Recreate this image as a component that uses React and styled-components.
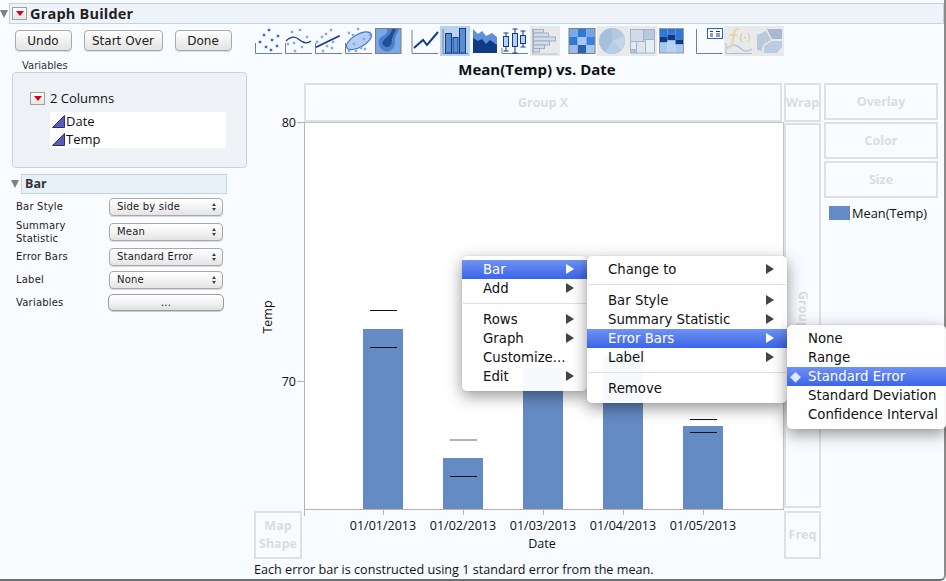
import React from 'react';
import styled, { createGlobalStyle } from 'styled-components';

const GlobalStyle = createGlobalStyle`
  html, body { margin: 0; padding: 0; background: #f8fbff; }
  body { font-family: "Open Sans", "DejaVu Sans", sans-serif; overflow: hidden; }
`;

const Shell = styled.div`
  position: relative;
  width: 946px;
  height: 581px;
  overflow: hidden;
`;

const Page = styled.div`
  box-sizing: border-box;
  width: 946px;
  height: 581px;
  background: #f8fbff;
  color: #111;
  overflow: hidden;
  border-bottom: 2px solid #6e6e6e;
  border-right: 2px solid #8c8c8c;
  border-bottom-right-radius: 6px;
`;

const HeaderRow = styled.div`
  display: flex;
  align-items: center;
  height: 21px;
  margin-top: 3px;
`;

const Disclosure = styled.span`
  flex: none;
  width: 0;
  height: 0;
  margin-left: ${(p) => p.$left || 0}px;
  margin-right: ${(p) => p.$right || 0}px;
  border-left: 4.5px solid transparent;
  border-right: 4.5px solid transparent;
  border-top: 8px solid #808080;
`;

const TitleBar = styled.div`
  flex: 1;
  box-sizing: border-box;
  height: 21px;
  display: flex;
  align-items: center;
  gap: 3px;
  padding-left: 2px;
  background: #edf3f9;
  border: 1px solid #bdd5e6;
`;

const TitleText = styled.span`
  font-family: "Open Sans", sans-serif;
  font-weight: 700;
  font-size: 14.5px;
  letter-spacing: 0.2px;
  color: #222;
`;

const RedButton = styled.span`
  flex: none;
  box-sizing: border-box;
  width: 15px;
  height: 13px;
  display: flex;
  align-items: center;
  justify-content: center;
  background: linear-gradient(#fdfdfd, #e6e6e6);
  border: 1px solid #a0a0a0;
  &::after {
    content: '';
    width: 0;
    height: 0;
    border-left: 4.5px solid transparent;
    border-right: 4.5px solid transparent;
    border-top: 5px solid #d8001c;
  }
`;

const Body = styled.div`
  display: flex;
  height: 555px;
`;

const LeftColumn = styled.div`
  flex: none;
  width: 254px;
  padding-top: 6px;
`;

const ButtonRow = styled.div`
  display: flex;
  gap: 12px;
  padding-left: 15px;
`;

const PushButton = styled.button`
  box-sizing: border-box;
  width: ${(p) => p.$w}px;
  height: 21px;
  padding: 0 1px 0 0;
  font-family: "DejaVu Sans", sans-serif;
  font-size: 12px;
  color: #222;
  background: linear-gradient(#ffffff, #f1f1f1 50%, #e4e4e4);
  border: 1px solid #a8a8a8;
  border-radius: 4px;
  box-shadow: 0 1px 0 #ddd;
`;

const SmallCaption = styled.div`
  margin: 7px 0 0 22px;
  height: 14px;
  line-height: 16px;
  font-family: "DejaVu Sans", sans-serif;
  font-size: 10px;
  color: #333;
`;

const VariablesPanel = styled.div`
  box-sizing: border-box;
  width: 235px;
  height: 96px;
  margin: 0 0 0 12px;
  padding: 16px 0 0 17px;
  background: #eef1f5;
  border: 1px solid #cdd2d8;
  border-radius: 4px;
`;

const ColumnsHead = styled.div`
  display: flex;
  align-items: center;
  gap: 5px;
  height: 18px;
  font-size: 13px;
`;

const ColumnList = styled.div`
  width: 176px;
  height: 36px;
  margin: 5px 0 0 20px;
  background: #fff;
`;

const ColumnRow = styled.div`
  display: flex;
  align-items: center;
  gap: 1px;
  height: 18px;
  padding-left: 2px;
  font-size: 13px;
`;

const SectionHead = styled.div`
  display: flex;
  align-items: center;
  margin-top: 6px;
  padding-left: 11px;
`;

const SectionBar = styled.div`
  box-sizing: border-box;
  width: 206px;
  height: 20px;
  line-height: 18px;
  padding-left: 3px;
  font-weight: 700;
  font-size: 12.5px;
  color: #333;
  background: #e8f0f8;
  border: 1px solid #bdd5e6;
`;

const FormRow = styled.div`
  display: grid;
  grid-template-columns: 93px 115px;
  align-items: center;
  height: ${(p) => p.$h}px;
  padding-left: 16px;
  font-family: "DejaVu Sans", sans-serif;
  font-size: 10px;
  line-height: 13px;
  letter-spacing: 0.2px;
  color: #222;
`;

const Select = styled.div`
  box-sizing: border-box;
  position: relative;
  width: 114px;
  height: 18px;
  line-height: 16px;
  padding-left: 7px;
  background: linear-gradient(#ffffff, #f3f3f3 50%, #e4e4e4);
  border: 1px solid #a9a9a9;
  border-radius: 4px;
  box-shadow: 0 1px 0 #d8d8d8;
  &::before, &::after {
    content: '';
    position: absolute;
    right: 6px;
    width: 0;
    height: 0;
    border-left: 2.5px solid transparent;
    border-right: 2.5px solid transparent;
  }
  &::before { top: 4px; border-bottom: 3px solid #444; }
  &::after { top: 9px; border-top: 3px solid #444; }
`;

const WideButton = styled.div`
  box-sizing: border-box;
  width: 116px;
  height: 17px;
  margin-left: -1px;
  line-height: 15px;
  text-align: center;
  background: linear-gradient(#ffffff, #f3f3f3 50%, #e0e0e0);
  border: 1px solid #9c9c9c;
  border-radius: 5px;
  box-shadow: 0 1px 0 #ccc;
`;

const RightColumn = styled.div`
  flex: 1;
  min-width: 0;
`;

const Toolbar = styled.div`
  display: flex;
  height: 30px;
  margin-top: 2px;
`;

const ToolSlot = styled.div`
  flex: none;
  width: 30px;
  height: 30px;
  margin-left: ${(p) => p.$gap || 0}px;
  background: ${(p) => (p.$tone === 'on' ? '#b9d3ec' : p.$tone === 'off' ? '#e8e9ea' : 'transparent')};
  svg { display: block; }
`;

const GraphTitle = styled.div`
  width: 566px;
  height: 27px;
  line-height: 27px;
  text-align: center;
  font-weight: 700;
  font-size: 15px;
  color: #111;
`;

const GraphGrid = styled.div`
  display: grid;
  grid-template-columns: 50px 480px 39px 115px;
  grid-template-rows: 39px 388px 49px;
`;

const Zone = styled.div`
  box-sizing: border-box;
  display: flex;
  align-items: center;
  justify-content: center;
  height: ${(p) => p.$h || 'auto'};
  margin: ${(p) => p.$mt || 0}px ${(p) => p.$mr || 0}px ${(p) => p.$mb || 0}px 0;
  border: 2px solid #e0e0e0;
  font-weight: 700;
  font-size: 12.5px;
  line-height: 18px;
  text-align: center;
  color: #dcdcdc;
  white-space: nowrap;
  writing-mode: ${(p) => (p.$vertical ? 'vertical-rl' : 'horizontal-tb')};
`;

const SideStack = styled.div`
  grid-column: 4;
  grid-row: 1 / 3;
  display: flex;
  flex-direction: column;
  gap: 2px;
  padding-left: 1px;
`;

const Legend = styled.div`
  display: flex;
  align-items: center;
  gap: 2px;
  margin: 4px 0 0 5px;
  height: 18px;
  font-size: 12.8px;
`;

const Swatch = styled.span`
  flex: none;
  width: 21px;
  height: 14px;
  background: #658bc4;
`;

const AxisSvg = styled.svg`
  display: block;
  overflow: visible;
  font-family: "Open Sans", sans-serif;
  font-size: 12.5px;
  fill: #111;
`;

const PlotBox = styled.div`
  height: 388px;
  background: #fff;
  svg { display: block; }
`;

const Footnote = styled.div`
  height: 18px;
  line-height: 22px;
  font-size: 12.62px;
  color: #111;
`;

const Menu = styled.div`
  position: absolute;
  left: ${(p) => p.$x}px;
  top: ${(p) => p.$y}px;
  width: ${(p) => p.$w}px;
  box-sizing: border-box;
  padding: 4px 0 5px;
  background: rgba(255, 255, 255, 0.95);
  border-radius: 5px;
  box-shadow: 0 5px 16px rgba(0, 0, 0, 0.42), 0 0 1px rgba(0, 0, 0, 0.3);
  font-family: "DejaVu Sans", sans-serif;
  font-size: 13.3px;
  color: #111;
`;

const MenuItem = styled.div`
  position: relative;
  height: 19px;
  line-height: 20px;
  padding-left: 21px;
  white-space: nowrap;
  color: ${(p) => (p.$active ? '#fff' : '#111')};
  background: ${(p) => (p.$active ? 'linear-gradient(#6f92f3, #3b64ea)' : 'transparent')};
`;

const MenuArrow = styled.span`
  position: absolute;
  right: 13px;
  top: 4px;
  width: 0;
  height: 0;
  border-top: 5px solid transparent;
  border-bottom: 5px solid transparent;
  border-left: 8px solid ${(p) => (p.$active ? '#fff' : '#444')};
`;

const MenuCheck = styled.span`
  position: absolute;
  left: 3px;
  top: 2px;
  font-size: 14px;
  line-height: 15px;
  color: #dfe6ff;
`;

const MenuRule = styled.div`
  height: 1px;
  margin: 5px 1px 6px;
  background: #e0e0e0;
`;

const BLUE = '#2f6fd0';
const NAVY = '#123a8c';
const SOFT = '#86abdf';

function Axes({ x0 = 1.5, x1 = 28, top = 17 }) {
  return <path d={`M${x0} ${top}V27.5H${x1}`} fill="none" stroke="#7f7f7f" strokeWidth="1" />;
}

function Dots({ pts, fill = BLUE }) {
  return pts.map(([x, y, dark], i) => (
    <rect key={i} x={x - 1.25} y={y - 1.25} width="2.5" height="2.5" fill={dark ? fill : SOFT} />
  ));
}

const Icons = {
  scatter: (
    <>
      <Axes />
      <Dots pts={[[15, 4, 1], [10, 9, 1], [24, 10, 1], [18, 14, 1], [6, 16, 1], [12, 21, 1], [23, 20, 1], [17, 24, 1]]} />
    </>
  ),
  smooth: (
    <>
      <Axes />
      <path d="M2 15C7 10 11 10 15 13.5S23 18 27 15" fill="none" stroke={NAVY} strokeWidth="1.2" />
      <Dots pts={[[8, 6], [16, 4], [23, 11], [4, 18], [10, 17], [18, 21], [11, 25]]} />
    </>
  ),
  fit: (
    <>
      <Axes />
      <path d="M2 21.3L25.7 9.7" stroke={NAVY} strokeWidth="1.8" />
      <Dots pts={[[12, 8], [17, 4], [8, 11], [3, 16], [13, 20], [19, 16], [9, 25], [18, 22]]} />
    </>
  ),
  ellipse: (
    <>
      <Axes />
      <ellipse cx="15" cy="14.7" rx="14" ry="6.3" transform="rotate(-30 15 14.7)" fill="#b4cdf0" stroke="#3f78d8" strokeWidth="1.2" />
      <Dots pts={[[5, 7], [9, 9], [14, 3], [26, 9], [20, 13], [10, 18], [17, 22], [5, 25], [12, 25], [21, 23]]} />
    </>
  ),
  contour: (
    <>
      <rect x="1.5" y="2.5" width="25.5" height="25" fill="#7aa6e6" stroke="#7f7f7f" />
      <path d="M13 3C14 7 11 9 7 11C3 14 4 22 10 25C17 27 22 21 21 15C21 10 24 7 25 3Z" fill="#4d80cc" />
      <path d="M18 3C17 8 14 10 10 14C7 17 9 21 13 21C17 21 18 17 18 13C19 9 21 6 22 3Z" fill="#1f5096" />
    </>
  ),
  line: (
    <>
      <Axes x0={2} x1={28} top={4} />
      <path d="M4 22L13 14L17 19L28 6" fill="none" stroke={NAVY} strokeWidth="2" />
    </>
  ),
  bar: (
    <>
      <path d="M3 3V27.5H28" fill="none" stroke="#6f8398" />
      <g fill="#5a8ed2" stroke={NAVY}>
        <rect x="5.5" y="7.5" width="6" height="19.5" />
        <rect x="13" y="11.5" width="5" height="15.5" />
        <rect x="19.5" y="2.5" width="6" height="24.5" />
      </g>
    </>
  ),
  area: (
    <>
      <path d="M3 3L8 8L12 5L16 10L22 7L27 11V27H3Z" fill="#5b8fd6" />
      <path d="M3 12L8 15L12 13L16 18L20 14L27 19V27H3Z" fill="#0f3a86" />
    </>
  ),
  box: (
    <>
      <Axes x0={2} x1={28} top={22} />
      <g fill="#b3d2f5" stroke={NAVY}>
        <path d="M6 7V25M3.5 7H8.5M3.5 25H8.5" fill="none" />
        <rect x="3.5" y="10.5" width="5" height="10" />
        <path d="M15 3V27M12.5 3H17.5M12.5 27H17.5" fill="none" />
        <rect x="12.5" y="7.5" width="5" height="13" />
        <path d="M23 5V21M20.5 5H25.5M20.5 21H25.5" fill="none" />
        <rect x="20.5" y="9.5" width="5" height="8" />
      </g>
    </>
  ),
  hist: (
    <g fill="#d2dcea" stroke="#9fb0c6">
      <path d="M2.5 2V28H28" fill="none" stroke="#b8bdc4" />
      <rect x="3.5" y="3.5" width="10" height="3.5" />
      <rect x="3.5" y="7" width="15" height="4" />
      <rect x="3.5" y="11" width="22" height="4" />
      <rect x="3.5" y="15" width="16" height="4" />
      <rect x="3.5" y="19" width="11" height="3.5" />
      <rect x="3.5" y="22.5" width="6" height="3.5" />
    </g>
  ),
  heat: (
    <>
      <rect x="2" y="2.5" width="8.7" height="8.5" fill="#7aa9ea" />
      <rect x="10.7" y="2.5" width="8.7" height="8.5" fill="#2f78d8" />
      <rect x="19.4" y="2.5" width="8.6" height="8.5" fill="#74a6e8" />
      <rect x="2" y="11" width="8.7" height="8" fill="#2f78d8" />
      <rect x="10.7" y="11" width="8.7" height="8" fill="#a5c8f2" />
      <rect x="19.4" y="11" width="8.6" height="8" fill="#3b80dc" />
      <rect x="2" y="19" width="8.7" height="8.5" fill="#96bdec" />
      <rect x="10.7" y="19" width="8.7" height="8.5" fill="#2d62ae" />
      <rect x="19.4" y="19" width="8.6" height="8.5" fill="#a5c8f2" />
      <rect x="2" y="2.5" width="26" height="25" fill="none" stroke="#7f7f7f" />
    </>
  ),
  pie: (
    <>
      <circle cx="15" cy="15" r="13" fill="#a8bfdc" />
      <path d="M15 15L15 2A13 13 0 0 1 27 10Z" fill="#b4c8e2" />
      <path d="M15 15L27 10A13 13 0 0 1 24 24Z" fill="#c3d5e8" />
      <path d="M15 15L24 24A13 13 0 0 1 8 26Z" fill="#b7cbe2" />
    </>
  ),
  treemap: (
    <g stroke="#a8b4c2">
      <rect x="3.5" y="3.5" width="13" height="12" fill="#d0dcea" />
      <rect x="16.5" y="3.5" width="11" height="10" fill="#b3c9e2" />
      <rect x="3.5" y="15.5" width="6" height="8" fill="#e4ebf2" />
      <rect x="3.5" y="23.5" width="6" height="3.5" fill="#aac0da" />
      <rect x="9.5" y="15.5" width="9" height="11.5" fill="#dde6f0" />
      <rect x="18.5" y="13.5" width="9" height="13.5" fill="#e6edf4" />
    </g>
  ),
  mosaic: (
    <>
      <rect x="2.5" y="2.5" width="8" height="8" fill="#2f78d8" />
      <rect x="2.5" y="10.5" width="8" height="6" fill="#0f3a86" />
      <rect x="2.5" y="16.5" width="8" height="10.5" fill="#a5c8f2" />
      <rect x="10.5" y="2.5" width="8" height="6" fill="#2f78d8" />
      <rect x="10.5" y="8.5" width="8" height="6" fill="#0f3a86" />
      <rect x="10.5" y="14.5" width="8" height="12.5" fill="#b3d2f5" />
      <rect x="18.5" y="2.5" width="8" height="11" fill="#2f78d8" />
      <rect x="18.5" y="13.5" width="8" height="5" fill="#0f3a86" />
      <rect x="18.5" y="18.5" width="8" height="8.5" fill="#a5c8f2" />
      <rect x="2.5" y="2.5" width="24" height="24.5" fill="none" stroke="#9a9a9a" />
    </>
  ),
  caption: (
    <>
      <path d="M2.5 3V27.5H28.5" fill="none" stroke="#7f7f7f" />
      <rect x="13.5" y="2.5" width="15" height="10" fill="#fff" stroke="#2f62c8" />
      <path d="M16 5.5H19M16 8H19M16 10H19M22 5.5H26M22 8H26M22 10H26" stroke={NAVY} />
    </>
  ),
  formula: (
    <>
      <path d="M2 17V27.5H28" fill="none" stroke="#b8bdc4" />
      <path d="M3 22C8 18 12 18 16 22S24 26 28 23" fill="none" stroke="#aebfd6" strokeWidth="1.2" />
      <path d="M15 3C11 2 10 5 10 8L8 19C7 22 6 22 4 21M6 9H13" fill="none" stroke="#e6d7a6" strokeWidth="2" />
      <path d="M18 7C16 10 16 13 18 16M24 7C26 10 26 13 24 16" fill="none" stroke="#d8cfae" strokeWidth="1.2" />
      <circle cx="21" cy="11.5" r="1" fill="#d8cfae" />
    </>
  ),
  map: (
    <>
      <path d="M3 9L12 5L17 14L9 19L8 25L3 24Z" fill="#b9c9de" />
      <path d="M13 3H28V13L18 13Z" fill="#a8b8cf" />
      <path d="M10 20L18 15L28 15V21L23 27H10Z" fill="#bccce0" />
    </>
  ),
};

const toolbar = [
  ['scatter'], ['smooth'], ['fit'], ['ellipse'], ['contour'],
  ['line', null, 6], ['bar', 'on'], ['area'], ['box'], ['hist', 'off'],
  ['heat', null, 7], ['pie', 'off'], ['treemap', 'off'], ['mosaic'],
  ['caption', null, 7], ['formula', 'off'], ['map', 'off'],
];

const ColumnGlyph = () => (
  <svg width="13" height="13" viewBox="0 0 13 13">
    <path d="M0.5 12.5L12.5 0.5V12.5Z" fill="#5c5cb4" stroke="#2a2a86" />
  </svg>
);

const bars = [
  { x: 59, top: 207, hi: 188.5, lo: 225.5 },
  { x: 139, top: 336, hi: 318, lo: 354.5, faint: true },
  { x: 219, top: 246 },
  { x: 299, top: 234 },
  { x: 379, top: 304, hi: 297.5, lo: 310.5 },
];

function Plot() {
  return (
    <PlotBox>
      <svg width="480" height="388">
        {bars.map((b) => (
          <g key={b.x}>
            <rect x={b.x} y={b.top} width="40" height={388 - b.top} fill="#658bc4" />
            {b.hi && <line x1={b.x + 7} x2={b.x + 34} y1={b.hi} y2={b.hi} stroke={b.faint ? '#666' : '#111'} />}
            {b.lo && <line x1={b.x + 7} x2={b.x + 34} y1={b.lo} y2={b.lo} stroke="#111" />}
          </g>
        ))}
        <path d="M0.5 388V0.5H479.5V388" fill="none" stroke="#c4c4c4" />
        <path d="M0 387.5H480M0.5 0V388" fill="none" stroke="#b4b4b4" strokeWidth="1" />
      </svg>
    </PlotBox>
  );
}

function YAxis() {
  return (
    <AxisSvg width="50" height="388">
      <path d="M43 0.5H50M43 259.5H50" stroke="#b4b4b4" />
      <text x="42" y="5" textAnchor="end">80</text>
      <text x="42" y="264" textAnchor="end">70</text>
      <text transform="translate(18 195) rotate(-90)" textAnchor="middle">Temp</text>
    </AxisSvg>
  );
}

function XAxis() {
  const dates = ['01/01/2013', '01/02/2013', '01/03/2013', '01/04/2013', '01/05/2013'];
  return (
    <AxisSvg width="480" height="49">
      <path d="M0.5 0V6" stroke="#b4b4b4" />
      {dates.map((d, i) => (
        <g key={d}>
          <line x1={79.5 + i * 80} x2={79.5 + i * 80} y1="0" y2="5" stroke="#b4b4b4" />
          <text x={79 + i * 80} y="20" textAnchor="middle">{d}</text>
        </g>
      ))}
      <text x="238" y="38" textAnchor="middle">Date</text>
    </AxisSvg>
  );
}

function Cascade() {
  return (
    <>
      <Menu $x={462} $y={256} $w={125}>
        <MenuItem $active>Bar<MenuArrow $active /></MenuItem>
        <MenuItem>Add<MenuArrow /></MenuItem>
        <MenuRule />
        <MenuItem>Rows<MenuArrow /></MenuItem>
        <MenuItem>Graph<MenuArrow /></MenuItem>
        <MenuItem>Customize...</MenuItem>
        <MenuItem>Edit<MenuArrow /></MenuItem>
      </Menu>
      <Menu $x={587} $y={256} $w={200}>
        <MenuItem>Change to<MenuArrow /></MenuItem>
        <MenuRule />
        <MenuItem>Bar Style<MenuArrow /></MenuItem>
        <MenuItem>Summary Statistic<MenuArrow /></MenuItem>
        <MenuItem $active>Error Bars<MenuArrow $active /></MenuItem>
        <MenuItem>Label<MenuArrow /></MenuItem>
        <MenuRule />
        <MenuItem>Remove</MenuItem>
      </Menu>
      <Menu $x={787} $y={325} $w={159}>
        <MenuItem>None</MenuItem>
        <MenuItem>Range</MenuItem>
        <MenuItem $active><MenuCheck>◆</MenuCheck>Standard Error</MenuItem>
        <MenuItem>Standard Deviation</MenuItem>
        <MenuItem>Confidence Interval</MenuItem>
      </Menu>
    </>
  );
}

export default function App() {
  return (
    <Shell>
      <GlobalStyle />
      <Page>
        <HeaderRow>
          <Disclosure $right={1} />
          <TitleBar>
            <RedButton />
            <TitleText>Graph Builder</TitleText>
          </TitleBar>
        </HeaderRow>
        <Body>
          <LeftColumn>
            <ButtonRow>
              <PushButton $w={57}>Undo</PushButton>
              <PushButton $w={79}>Start Over</PushButton>
              <PushButton $w={57}>Done</PushButton>
            </ButtonRow>
            <SmallCaption>Variables</SmallCaption>
            <VariablesPanel>
              <ColumnsHead><RedButton />2 Columns</ColumnsHead>
              <ColumnList>
                <ColumnRow><ColumnGlyph />Date</ColumnRow>
                <ColumnRow><ColumnGlyph />Temp</ColumnRow>
              </ColumnList>
            </VariablesPanel>
            <SectionHead>
              <Disclosure $right={2} />
              <SectionBar>Bar</SectionBar>
            </SectionHead>
            <FormRow $h={25}><span>Bar Style</span><Select>Side by side</Select></FormRow>
            <FormRow $h={25}><span>Summary<br />Statistic</span><Select>Mean</Select></FormRow>
            <FormRow $h={25}><span>Error Bars</span><Select>Standard Error</Select></FormRow>
            <FormRow $h={21}><span>Label</span><Select>None</Select></FormRow>
            <FormRow $h={25}><span>Variables</span><WideButton>...</WideButton></FormRow>
          </LeftColumn>
          <RightColumn>
            <Toolbar>
              {toolbar.map(([name, tone, gap]) => (
                <ToolSlot key={name} $tone={tone} $gap={gap}>
                  <svg width="30" height="30" viewBox="0 0 30 30">{Icons[name]}</svg>
                </ToolSlot>
              ))}
            </Toolbar>
            <GraphTitle>Mean(Temp) vs. Date</GraphTitle>
            <GraphGrid>
              <div />
              <Zone $mr={2}>Group X</Zone>
              <Zone $mr={2}>Wrap</Zone>
              <SideStack>
                <Zone $h="37px">Overlay</Zone>
                <Zone $h="37px">Color</Zone>
                <Zone $h="37px">Size</Zone>
                <Legend><Swatch />Mean(Temp)</Legend>
              </SideStack>
              <YAxis />
              <Plot />
              <Zone $mr={2} $mt={1} $mb={2} $vertical>Group Y</Zone>
              <Zone $h="48px" $mr={2} $mt={1}>Map<br />Shape</Zone>
              <XAxis />
              <Zone $h="48px" $mr={2} $mt={1}>Freq</Zone>
            </GraphGrid>
            <Footnote>Each error bar is constructed using 1 standard error from the mean.</Footnote>
          </RightColumn>
        </Body>
      </Page>
      <Cascade />
    </Shell>
  );
}
